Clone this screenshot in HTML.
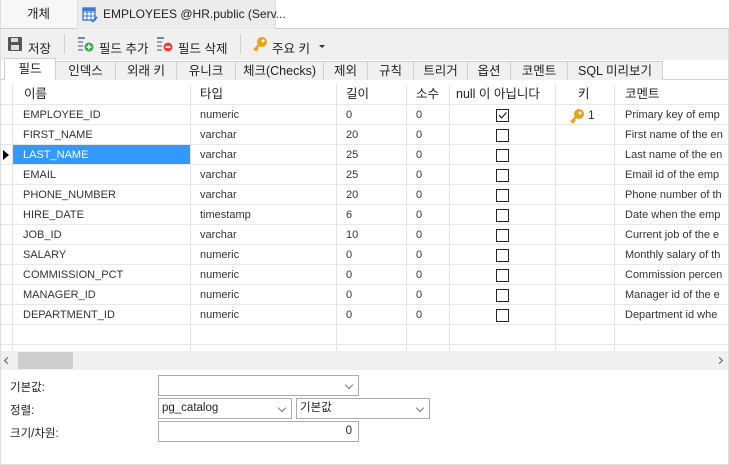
<!DOCTYPE html>
<html><head><meta charset="utf-8">
<style>
*{box-sizing:border-box;margin:0;padding:0}
body{width:729px;height:465px;overflow:hidden;background:#fff;font-family:"Liberation Sans","Noto Sans CJK KR",sans-serif;font-size:12px;color:#222;position:relative}
.a{position:absolute;white-space:nowrap}
.tab{position:absolute;top:61px;height:19px;background:#f0f0f0;border:1px solid #d0d0d0;border-bottom:none;text-align:center;line-height:18px;font-size:12.5px}
.vl{position:absolute;top:84px;width:1px;height:267px;background:#e4e4e4}
.hl{position:absolute;left:0;width:729px;height:1px;background:#e8e8e8}
.cell{position:absolute;line-height:21px;font-size:11px;color:#333}
.cb{position:absolute;left:496px;width:13px;height:13px;border:1px solid #222;background:#fff}
.box{position:absolute;height:21px;border:1px solid #aaa;background:#fff;font-size:11.5px;line-height:19px;padding-left:3px}
.chev{position:absolute;right:6px;top:6px;width:6px;height:6px;border-right:1px solid #777;border-bottom:1px solid #777;transform:rotate(45deg)}
</style></head><body>
<div class="a" style="left:0;top:0;width:77px;height:29px;background:#f7f7f7;border-bottom:1px solid #ccc;text-align:center;line-height:28px;font-size:12.5px">개체</div>
<div class="a" style="left:77px;top:0;width:199px;height:29px;background:#ececec;border-left:1px solid #ddd;border-right:1px solid #ddd"></div>
<svg class="a" style="left:82px;top:7px" width="16" height="16" viewBox="0 0 16 16"><rect x="1" y="1" width="12" height="12" fill="#fff" stroke="#3a7bd5" stroke-width="1.4"/><path d="M1 5H13M1 9H13M5 1V13M9 1V13" stroke="#3a7bd5"/><rect x="1" y="1" width="12" height="3" fill="#3a7bd5"/><path d="M10 15L15 10" stroke="#3a7bd5" stroke-width="2"/></svg>
<div class="a" style="left:103px;top:7px;font-size:12px">EMPLOYEES @HR.public (Serv...</div>
<div class="a" style="left:276px;top:28px;width:453px;height:1px;background:#ccc"></div>
<div class="a" style="left:0;top:29px;width:729px;height:31px;background:#f0f0f0"></div>
<svg class="a" style="left:8px;top:37px" width="14" height="14" viewBox="0 0 14 14"><rect x="0" y="0" width="14" height="14" rx="1" fill="#555"/><rect x="3" y="1" width="7" height="4" fill="#ddd"/><rect x="3" y="8" width="8" height="5" fill="#ddd"/></svg>
<div class="a" style="left:28px;top:38px;font-size:12.5px">저장</div>
<div class="a" style="left:64px;top:34px;width:1px;height:20px;background:#d0d0d0"></div>
<svg class="a" style="left:78px;top:36px" width="16" height="16" viewBox="0 0 16 16"><path d="M0 2H7M0 6H5M0 10H5M0 14H5" stroke="#888" stroke-width="1.5"/><path d="M0 2H7" stroke="#3a7bd5" stroke-width="1.5"/><circle cx="11" cy="11" r="4.5" fill="#2ea84a"/><path d="M8.5 11H13.5M11 8.5V13.5" stroke="#fff" stroke-width="1.6"/></svg>
<div class="a" style="left:99px;top:38px;font-size:12.5px">필드 추가</div>
<svg class="a" style="left:157px;top:36px" width="16" height="16" viewBox="0 0 16 16"><path d="M0 2H7M0 6H5M0 10H5M0 14H5" stroke="#888" stroke-width="1.5"/><path d="M0 2H7" stroke="#3a7bd5" stroke-width="1.5"/><circle cx="11" cy="11" r="4.5" fill="#e04040"/><path d="M8.5 11H13.5" stroke="#fff" stroke-width="1.6"/></svg>
<div class="a" style="left:178px;top:38px;font-size:12.5px">필드 삭제</div>
<div class="a" style="left:240px;top:34px;width:1px;height:20px;background:#d0d0d0"></div>
<svg class="a" style="left:252px;top:36px" width="16" height="16" viewBox="0 0 16 16"><circle cx="10" cy="6" r="5" fill="#e8a317"/><circle cx="11" cy="5" r="1.5" fill="#fff"/><path d="M7 9L2 14M3 13L5 15M4.5 11.5L6 13" stroke="#e8a317" stroke-width="2.2"/></svg>
<div class="a" style="left:272px;top:38px;font-size:12.5px">주요 키</div>
<div class="a" style="left:319px;top:45px;border-left:3px solid transparent;border-right:3px solid transparent;border-top:3px solid #333"></div>
<div class="a" style="left:0;top:60px;width:729px;height:20px;background:#fff"></div>
<div class="a" style="left:0;top:79px;width:729px;height:1px;background:#d0d0d0"></div>
<div class="a" style="left:4px;top:58px;width:52px;height:22px;background:#fff;border:1px solid #d0d0d0;border-bottom:none;text-align:center;line-height:20px;font-size:12.5px;z-index:2">필드</div>
<div class="tab" style="left:55px;width:61px">인덱스</div>
<div class="tab" style="left:115px;width:62px">외래 키</div>
<div class="tab" style="left:176px;width:60px">유니크</div>
<div class="tab" style="left:235px;width:89px">체크(Checks)</div>
<div class="tab" style="left:323px;width:45px">제외</div>
<div class="tab" style="left:367px;width:47px">규칙</div>
<div class="tab" style="left:413px;width:55px">트리거</div>
<div class="tab" style="left:467px;width:44px">옵션</div>
<div class="tab" style="left:510px;width:58px">코멘트</div>
<div class="tab" style="left:567px;width:96px">SQL 미리보기</div>
<div class="vl" style="left:12px"></div><div class="vl" style="left:190px"></div><div class="vl" style="left:336px"></div><div class="vl" style="left:406px"></div><div class="vl" style="left:449px"></div><div class="vl" style="left:555px"></div><div class="vl" style="left:614px"></div>
<div class="hl" style="top:104px"></div><div class="hl" style="top:124px"></div><div class="hl" style="top:144px"></div><div class="hl" style="top:164px"></div><div class="hl" style="top:184px"></div><div class="hl" style="top:204px"></div><div class="hl" style="top:224px"></div><div class="hl" style="top:244px"></div><div class="hl" style="top:264px"></div><div class="hl" style="top:284px"></div><div class="hl" style="top:304px"></div><div class="hl" style="top:324px"></div><div class="hl" style="top:344px"></div>
<div class="cell" style="left:24px;top:84px;font-size:12.5px;color:#222">이름</div>
<div class="cell" style="left:200px;top:84px;font-size:12.5px;color:#222">타입</div>
<div class="cell" style="left:346px;top:84px;font-size:12.5px;color:#222">길이</div>
<div class="cell" style="left:416px;top:84px;font-size:12.5px;color:#222">소수</div>
<div class="cell" style="left:456px;top:84px;font-size:12.5px;color:#222">null 이 아닙니다</div>
<div class="cell" style="left:578px;top:84px;font-size:12.5px;color:#222">키</div>
<div class="cell" style="left:625px;top:84px;font-size:12.5px;color:#222">코멘트</div>
<div class="a" style="left:13px;top:145px;width:177px;height:19px;background:#3399ff"></div>
<div class="a" style="left:3px;top:150px;border-top:5px solid transparent;border-bottom:5px solid transparent;border-left:6px solid #000"></div>
<div class="cell" style="left:23px;top:105px">EMPLOYEE_ID</div><div class="cell" style="left:200px;top:105px">numeric</div><div class="cell" style="left:346px;top:105px">0</div><div class="cell" style="left:416px;top:105px">0</div><div class="cell" style="left:625px;top:105px">Primary key of emp</div>
<div class="cell" style="left:23px;top:125px">FIRST_NAME</div><div class="cell" style="left:200px;top:125px">varchar</div><div class="cell" style="left:346px;top:125px">20</div><div class="cell" style="left:416px;top:125px">0</div><div class="cell" style="left:625px;top:125px">First name of the en</div>
<div class="cell" style="left:23px;top:145px;color:#fff">LAST_NAME</div><div class="cell" style="left:200px;top:145px">varchar</div><div class="cell" style="left:346px;top:145px">25</div><div class="cell" style="left:416px;top:145px">0</div><div class="cell" style="left:625px;top:145px">Last name of the en</div>
<div class="cell" style="left:23px;top:165px">EMAIL</div><div class="cell" style="left:200px;top:165px">varchar</div><div class="cell" style="left:346px;top:165px">25</div><div class="cell" style="left:416px;top:165px">0</div><div class="cell" style="left:625px;top:165px">Email id of the emp</div>
<div class="cell" style="left:23px;top:185px">PHONE_NUMBER</div><div class="cell" style="left:200px;top:185px">varchar</div><div class="cell" style="left:346px;top:185px">20</div><div class="cell" style="left:416px;top:185px">0</div><div class="cell" style="left:625px;top:185px">Phone number of th</div>
<div class="cell" style="left:23px;top:205px">HIRE_DATE</div><div class="cell" style="left:200px;top:205px">timestamp</div><div class="cell" style="left:346px;top:205px">6</div><div class="cell" style="left:416px;top:205px">0</div><div class="cell" style="left:625px;top:205px">Date when the emp</div>
<div class="cell" style="left:23px;top:225px">JOB_ID</div><div class="cell" style="left:200px;top:225px">varchar</div><div class="cell" style="left:346px;top:225px">10</div><div class="cell" style="left:416px;top:225px">0</div><div class="cell" style="left:625px;top:225px">Current job of the e</div>
<div class="cell" style="left:23px;top:245px">SALARY</div><div class="cell" style="left:200px;top:245px">numeric</div><div class="cell" style="left:346px;top:245px">0</div><div class="cell" style="left:416px;top:245px">0</div><div class="cell" style="left:625px;top:245px">Monthly salary of th</div>
<div class="cell" style="left:23px;top:265px">COMMISSION_PCT</div><div class="cell" style="left:200px;top:265px">numeric</div><div class="cell" style="left:346px;top:265px">0</div><div class="cell" style="left:416px;top:265px">0</div><div class="cell" style="left:625px;top:265px">Commission percen</div>
<div class="cell" style="left:23px;top:285px">MANAGER_ID</div><div class="cell" style="left:200px;top:285px">numeric</div><div class="cell" style="left:346px;top:285px">0</div><div class="cell" style="left:416px;top:285px">0</div><div class="cell" style="left:625px;top:285px">Manager id of the e</div>
<div class="cell" style="left:23px;top:305px">DEPARTMENT_ID</div><div class="cell" style="left:200px;top:305px">numeric</div><div class="cell" style="left:346px;top:305px">0</div><div class="cell" style="left:416px;top:305px">0</div><div class="cell" style="left:625px;top:305px">Department id whe</div>
<div class="cb" style="top:109px"></div><svg class="a" style="left:497px;top:110px" width="11" height="11"><path d="M2 5L4.5 8L9.5 2.5" stroke="#222" fill="none" stroke-width="1.2"/></svg>
<div class="cb" style="top:129px"></div><div class="cb" style="top:149px"></div><div class="cb" style="top:169px"></div><div class="cb" style="top:189px"></div><div class="cb" style="top:209px"></div><div class="cb" style="top:229px"></div><div class="cb" style="top:249px"></div><div class="cb" style="top:269px"></div><div class="cb" style="top:289px"></div><div class="cb" style="top:309px"></div>
<svg class="a" style="left:569px;top:108px" width="16" height="16" viewBox="0 0 16 16"><circle cx="10" cy="6" r="5" fill="#e8a317"/><circle cx="11" cy="5" r="1.5" fill="#fff"/><path d="M7 9L2 14M3 13L5 15M4.5 11.5L6 13" stroke="#e8a317" stroke-width="2.2"/></svg>
<div class="cell" style="left:588px;top:105px;font-size:12px">1</div>
<div class="a" style="left:0;top:351px;width:729px;height:19px;background:#f0f0f0"></div>
<div class="a" style="left:18px;top:352px;width:55px;height:17px;background:#cdcdcd"></div>
<div class="a" style="left:5px;top:358px;width:5px;height:5px;border-left:1px solid #555;border-bottom:1px solid #555;transform:rotate(45deg)"></div>
<div class="a" style="left:717px;top:358px;width:5px;height:5px;border-right:1px solid #555;border-top:1px solid #555;transform:rotate(45deg)"></div>
<div class="a" style="left:10px;top:379px;font-size:11.5px">기본값:</div>
<div class="a" style="left:10px;top:402px;font-size:11.5px">정렬:</div>
<div class="a" style="left:10px;top:425px;font-size:11.5px">크기/차원:</div>
<div class="box" style="left:158px;top:375px;width:201px"><div class="chev"></div></div>
<div class="box" style="left:158px;top:398px;width:134px">pg_catalog<div class="chev"></div></div>
<div class="box" style="left:296px;top:398px;width:134px">기본값<div class="chev"></div></div>
<div class="box" style="left:158px;top:421px;width:201px;text-align:right;padding-right:6px">0</div>
<div class="a" style="left:0;top:0;width:1px;height:465px;background:#ddd"></div>
<div class="a" style="left:728px;top:29px;width:1px;height:436px;background:#ddd"></div>
<div class="a" style="left:0;top:464px;width:729px;height:1px;background:#ddd"></div>
</body></html>
